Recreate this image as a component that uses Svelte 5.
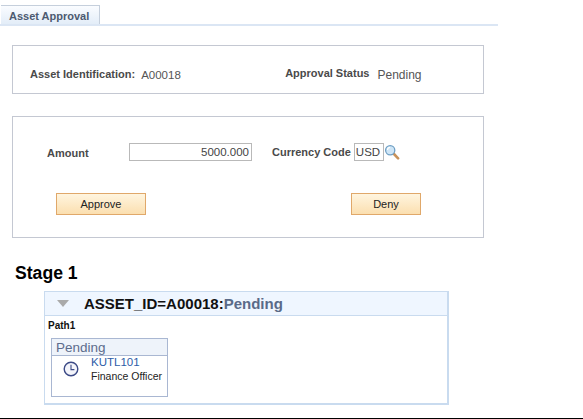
<script>
  let amount = '5000.000';
  let currency = 'USD';
</script>

<div class="page">
  <div class="tabs">
    <div class="tab">Asset Approval</div>
  </div>

  <section class="box summary">
    <span class="label id-label">Asset Identification:</span>
    <span class="value id-value">A00018</span>
    <span class="label status-label">Approval Status</span>
    <span class="value status-value">Pending</span>
  </section>

  <section class="box form">
    <div class="fields">
      <span class="label amount-label">Amount</span>
      <input class="input amount" value={amount} readonly />
      <span class="label currency-label">Currency Code</span>
      <input class="input currency" value={currency} readonly />
      <svg class="lookup" width="16" height="16" viewBox="0 0 16 16">
        <path d="M9.5 9.5l4.6 4.8" stroke="#c8925a" stroke-width="2.6" stroke-linecap="round" />
        <circle cx="6.2" cy="6.2" r="4.6" fill="#cfe6f7" stroke="#6f9fc4" stroke-width="1.3" />
        <path d="M3.5 6a2.8 2.8 0 0 1 2.6-2.6" fill="none" stroke="#fff" stroke-width="1.2" />
      </svg>
    </div>
    <div class="actions">
      <button class="btn approve">Approve</button>
      <button class="btn deny">Deny</button>
    </div>
  </section>

  <h2 class="stage">Stage 1</h2>

  <section class="panel">
    <header class="panel-head">
      <span class="caret"></span>
      <span class="asset">ASSET_ID=A00018:</span><span class="asset-status">Pending</span>
    </header>
    <div class="panel-body">
      <div class="path">Path1</div>
      <div class="step">
        <div class="step-head">Pending</div>
        <div class="step-body">
          <svg class="clock" width="16" height="16" viewBox="0 0 16 16">
            <circle cx="8" cy="8" r="6.8" fill="#f4f5fb" stroke="#3c4a86" stroke-width="1.4" />
            <path d="M8 3.8V8.6H11.4" fill="none" stroke="#3c4a86" stroke-width="1.1" />
          </svg>
          <div class="who">
            <span class="user">KUTL101</span>
            <span class="role">Finance Officer</span>
          </div>
        </div>
      </div>
    </div>
  </section>
</div>

<style>
  :global(body) {
    margin: 0;
    background: #fff;
  }

  .page {
    width: 583px;
    height: 419px;
    box-sizing: border-box;
    padding-top: 5px;
    border-bottom: 1px solid #000;
    font-family: "Liberation Sans", Arial, sans-serif;
    font-size: 11px;
    color: #444;
    overflow: hidden;
  }

  .tabs {
    width: 498px;
    height: 21px;
    box-sizing: border-box;
    padding-left: 1px;
    border-bottom: 2px solid #dbe6f4;
  }

  .tab {
    width: 99px;
    height: 19px;
    box-sizing: border-box;
    padding: 4px 0 0 8px;
    border: 1px solid #c5cfdc;
    border-bottom: none;
    border-left: none;
    background: linear-gradient(#fafcff, #e3edf8);
    font-size: 11px;
    font-weight: bold;
    color: #4c5a70;
  }

  .box {
    width: 472px;
    box-sizing: border-box;
    margin-left: 12px;
    border: 1px solid #c4c8d2;
  }

  .summary {
    height: 49px;
    margin-top: 19px;
    padding: 22px 0 0 17px;
    display: flex;
    align-items: flex-start;
  }

  .label {
    font-weight: bold;
    color: #4a4a4a;
  }

  .value {
    font-size: 11.5px;
    color: #555;
  }

  .id-value {
    margin-top: 1px;
    margin-left: 6px;
    width: 144px;
  }

  .status-label {
    margin-top: -1px;
    margin-right: 8px;
  }

  .status-value {
    font-size: 12px;
  }

  .form {
    height: 122px;
    margin-top: 22px;
    padding: 26px 0 0 34px;
  }

  .fields {
    display: flex;
    align-items: center;
    height: 18px;
  }

  .amount-label {
    width: 82px;
    margin-top: 1px;
  }

  .input {
    box-sizing: border-box;
    height: 18px;
    padding: 0 2px;
    border: 1px solid #b9b9b9;
    background: #fff;
    font: 11.5px "Liberation Sans", Arial, sans-serif;
    color: #444;
    outline: none;
  }

  .amount {
    width: 123px;
    text-align: right;
  }

  .currency-label {
    margin-left: 20px;
    margin-right: 3px;
  }

  .currency {
    width: 30px;
    padding-left: 1px;
  }

  .actions {
    display: flex;
    margin-top: 32px;
    padding-left: 9px;
  }

  .btn {
    height: 22px;
    padding: 0 0 1px;
    border: 1px solid #e0a86a;
    background: linear-gradient(#fff5df, #fbdfb0);
    font: 11px "Liberation Sans", Arial, sans-serif;
    color: #222;
  }

  .approve {
    width: 90px;
  }

  .deny {
    width: 70px;
    margin-left: 205px;
  }

  .stage {
    margin: 25px 0 0 15px;
    font-size: 17.6px;
    line-height: 20px;
    font-weight: bold;
    color: #000;
  }

  .panel {
    width: 405px;
    height: 114px;
    box-sizing: border-box;
    margin: 8px 0 0 44px;
    border: 1px solid #c9dbef;
    border-width: 1px 2px 2px 1px;
  }

  .panel-head {
    height: 24px;
    box-sizing: border-box;
    padding: 0 0 1px 12px;
    display: flex;
    align-items: center;
    background: #eff6ff;
    border-bottom: 1px solid #c9dbef;
    font-size: 15px;
    font-weight: bold;
  }

  .caret {
    width: 0;
    height: 0;
    margin-right: 15px;
    border-left: 6px solid transparent;
    border-right: 6px solid transparent;
    border-top: 7px solid #aaa;
  }

  .asset {
    color: #111;
  }

  .asset-status {
    color: #5a6a88;
  }

  .panel-body {
    padding: 4px 0 0 3px;
  }

  .path {
    font-size: 10px;
    font-weight: bold;
    line-height: 12px;
    color: #111;
  }

  .step {
    width: 117px;
    height: 59px;
    box-sizing: border-box;
    margin: 6px 0 0 3px;
    border: 1px solid #a9b7d2;
  }

  .step-head {
    height: 17px;
    box-sizing: border-box;
    padding-left: 4px;
    background: #eef3fa;
    border-bottom: 1px solid #a9b7d2;
    font-size: 13.5px;
    line-height: 17px;
    color: #5c6c8c;
  }

  .step-body {
    display: flex;
    padding: 0 0 0 11px;
  }

  .clock {
    margin-top: 5px;
    margin-right: 12px;
  }

  .who {
    display: flex;
    flex-direction: column;
  }

  .user {
    font-size: 11.5px;
    line-height: 13px;
    color: #2e5da8;
  }

  .role {
    font-size: 10.5px;
    line-height: 14px;
    color: #222;
  }
</style>
